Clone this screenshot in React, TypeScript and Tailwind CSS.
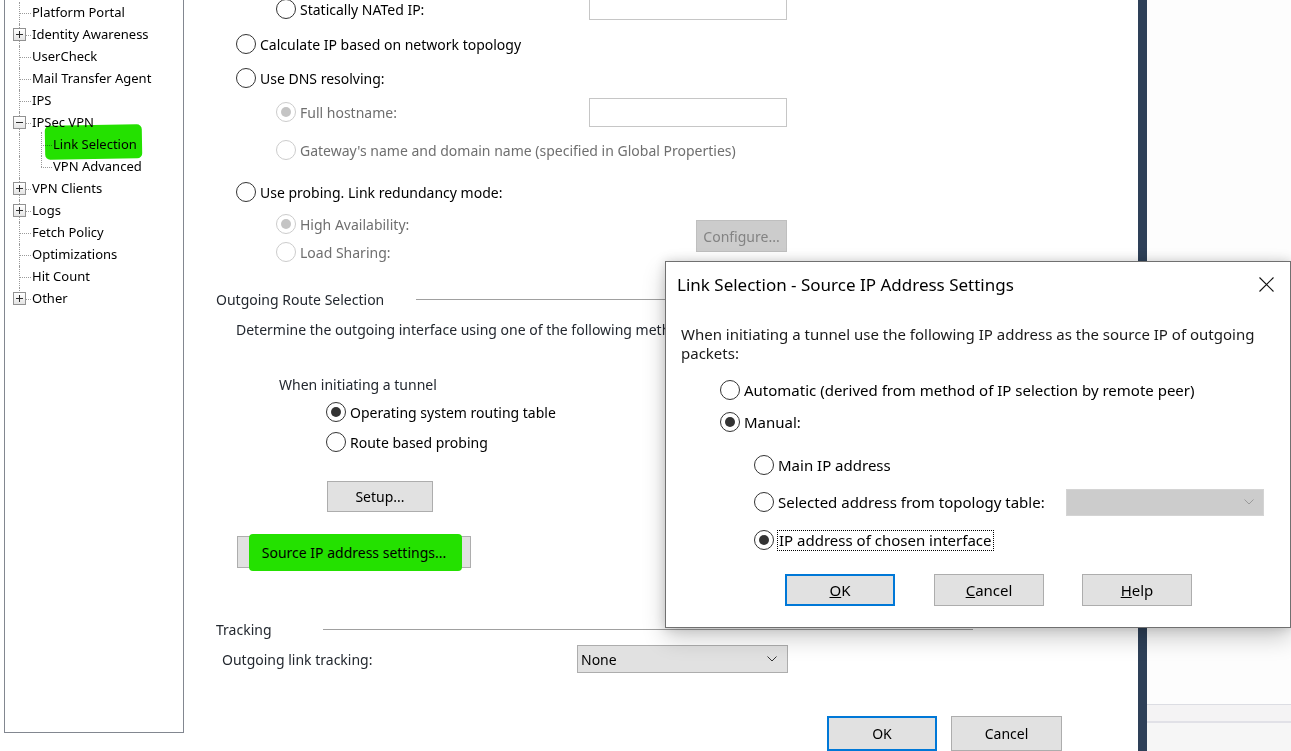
import clsx from 'clsx'
import { ReactNode } from 'react'

type RadioProps = { checked?: boolean; disabled?: boolean }

function Radio({ checked = false, disabled = false }: RadioProps) {
  return (
    <span
      className={clsx(
        'flex h-[20px] w-[20px] shrink-0 items-center justify-center rounded-full border bg-white',
        disabled ? 'border-[#cccccc]' : 'border-[#333333]',
      )}
    >
      {checked ? (
        <span className={clsx('h-[10px] w-[10px] rounded-full', disabled ? 'bg-[#c4c4c4]' : 'bg-[#333333]')} />
      ) : null}
    </span>
  )
}

function RadioRow({ label, checked, disabled }: { label: string; checked?: boolean; disabled?: boolean }) {
  return (
    <div className="flex h-[28px] items-center">
      <Radio checked={checked} disabled={disabled} />
      <span className={clsx('ml-[4px] whitespace-nowrap', disabled ? 'text-[#6f6f6f]' : 'text-black')}>{label}</span>
    </div>
  )
}

function Chevron({ color = '#333333' }: { color?: string }) {
  return (
    <svg width="10" height="6" viewBox="0 0 10 6" fill="none">
      <path d="M0.5 0.5 L5 5 L9.5 0.5" stroke={color} strokeWidth="1" />
    </svg>
  )
}

type TreeItem = { label: string; box?: 'plus' | 'minus'; child?: boolean; last?: boolean; lastChild?: boolean; mark?: boolean }

const TREE: TreeItem[] = [
  { label: 'Platform Portal' },
  { label: 'Identity Awareness', box: 'plus' },
  { label: 'UserCheck' },
  { label: 'Mail Transfer Agent' },
  { label: 'IPS' },
  { label: 'IPSec VPN', box: 'minus' },
  { label: 'Link Selection', child: true, mark: true },
  { label: 'VPN Advanced', child: true, lastChild: true },
  { label: 'VPN Clients', box: 'plus' },
  { label: 'Logs', box: 'plus' },
  { label: 'Fetch Policy' },
  { label: 'Optimizations' },
  { label: 'Hit Count' },
  { label: 'Other', box: 'plus', last: true },
]

function ExpandBox({ kind }: { kind: 'plus' | 'minus' }) {
  return (
    <span className="absolute left-[8px] top-[4px] z-10 flex h-[13px] w-[13px] items-center justify-center border border-[#919191] bg-gradient-to-b from-white to-[#e4e4e4]">
      <svg width="11" height="11" viewBox="0 0 11 11">
        <path d="M2 5.5 H9" stroke="#2b2b2b" strokeWidth="1" />
        {kind === 'plus' ? <path d="M5.5 2 V9" stroke="#2b2b2b" strokeWidth="1" /> : null}
      </svg>
    </span>
  )
}

function TreeRow({ item }: { item: TreeItem }) {
  return (
    <div className={clsx('relative flex h-[22px] items-center', item.child ? 'pl-[48px]' : 'pl-[27px]')}>
      <span
        className={clsx(
          'absolute left-[14px] top-0 border-l border-dotted border-[#9a9a9a]',
          item.last ? 'h-[11px]' : 'h-[22px]',
        )}
      />
      {item.child ? (
        <>
          <span
            className={clsx(
              'absolute left-[36px] border-l border-dotted border-[#9a9a9a]',
              item.label === 'Link Selection' ? 'top-[-2px] h-[24px]' : 'top-0 h-[11px]',
            )}
          />
          <span className="absolute left-[36px] top-[11px] w-[11px] border-t border-dotted border-[#9a9a9a]" />
        </>
      ) : (
        <span className="absolute left-[14px] top-[11px] w-[12px] border-t border-dotted border-[#9a9a9a]" />
      )}
      {item.box ? <ExpandBox kind={item.box} /> : null}
      {item.mark ? (
        <span className="absolute left-[40px] top-[-9px] h-[34px] w-[97px] -rotate-1 rounded-[5px] bg-[#24e100] mix-blend-multiply" />
      ) : null}
      <span className="relative whitespace-nowrap text-black">{item.label}</span>
    </div>
  )
}

function WinButton({
  children,
  className,
  primary,
}: {
  children: ReactNode
  className?: string
  primary?: boolean
}) {
  return (
    <div
      className={clsx(
        'flex items-center justify-center bg-[#e1e1e1] text-black',
        primary ? 'border-2 border-[#0078d7]' : 'border border-[#adadad]',
        className,
      )}
    >
      {children}
    </div>
  )
}

function SourceIpDialog() {
  return (
    <div className="absolute left-[665px] top-[261px] flex h-[367px] w-[626px] flex-col border border-[#707070] bg-white text-[15px] text-black shadow-[0_0_10px_rgba(0,0,0,0.16),0_10px_22px_rgba(0,0,0,0.2)]">
      <div className="flex h-[45px] items-center justify-between pl-[11px] pr-[16px]">
        <span className="text-[17px] text-black">Link Selection - Source IP Address Settings</span>
        <svg width="15" height="15" viewBox="0 0 15 15">
          <path d="M0.5 0.5 L14.5 14.5 M14.5 0.5 L0.5 14.5" stroke="#111111" strokeWidth="1.1" />
        </svg>
      </div>

      <p className="mt-[18px] pl-[15px] leading-[19px] text-[#1a1a1a]">
        When initiating a tunnel use the following IP address as the source IP of outgoing
        <br />
        packets:
      </p>

      <div className="mt-[13px] pl-[54px]">
        <RadioRow label="Automatic (derived from method of IP selection by remote peer)" />
        <div className="mt-[4px]">
          <RadioRow label="Manual:" checked />
        </div>
      </div>

      <div className="mt-[15px] pl-[88px]">
        <RadioRow label="Main IP address" />
        <div className="mt-[9px] flex items-center">
          <div className="w-[312px]">
            <RadioRow label="Selected address from topology table:" />
          </div>
          <div className="flex h-[27px] w-[198px] items-center justify-end border border-[#d4d4d4] bg-[#cccccc] pr-[9px]">
            <Chevron color="#9a9a9a" />
          </div>
        </div>
        <div className="mt-[10px] flex h-[28px] items-center">
          <Radio checked />
          <span className="ml-[3px] whitespace-nowrap border border-dotted border-black px-[1px] leading-[19px]">
            IP address of chosen interface
          </span>
        </div>
      </div>

      <div className="mt-[20px] flex pl-[119px]">
        <WinButton primary className="h-[32px] w-[110px]">
          <span>
            <span className="underline">O</span>K
          </span>
        </WinButton>
        <WinButton className="ml-[39px] h-[32px] w-[110px]">
          <span>
            <span className="underline">C</span>ancel
          </span>
        </WinButton>
        <WinButton className="ml-[38px] h-[32px] w-[110px]">
          <span>
            <span className="underline">H</span>elp
          </span>
        </WinButton>
      </div>
    </div>
  )
}

export default function App() {
  return (
    <div className="relative flex h-[751px] w-full overflow-hidden bg-white font-['Noto_Sans',sans-serif] text-[14px]">
      {/* tree */}
      <div className="ml-[4px] h-[733px] w-[180px] shrink-0 border-x border-b border-[#828790] bg-white pt-[2px] text-[13px]">
        {TREE.map((item) => (
          <TreeRow key={item.label} item={item} />
        ))}
      </div>

      {/* main form */}
      <div className="flex min-w-0 flex-1 flex-col">
        <div className="mt-[-5px] flex h-[28px] items-center pl-[92px]">
          <div className="w-[313px]">
            <RadioRow label="Statically NATed IP:" />
          </div>
          <div className="mb-[8px] h-[30px] w-[198px] border border-[#c6c6c6] bg-white" />
        </div>

        <div className="mt-[7px] pl-[52px]">
          <RadioRow label="Calculate IP based on network topology" />
        </div>
        <div className="mt-[6px] pl-[52px]">
          <RadioRow label="Use DNS resolving:" />
        </div>
        <div className="mt-[6px] flex h-[28px] items-center pl-[92px]">
          <div className="w-[313px]">
            <RadioRow label="Full hostname:" checked disabled />
          </div>
          <div className="h-[29px] w-[198px] border border-[#c6c6c6] bg-white" />
        </div>
        <div className="mt-[10px] pl-[92px]">
          <RadioRow label="Gateway's name and domain name (specified in Global Properties)" disabled />
        </div>
        <div className="mt-[14px] pl-[52px]">
          <RadioRow label="Use probing. Link redundancy mode:" />
        </div>
        <div className="mt-[4px] flex items-center pl-[92px]">
          <div className="w-[420px]">
            <RadioRow label="High Availability:" checked disabled />
            <RadioRow label="Load Sharing:" disabled />
          </div>
          <div className="mb-[4px] flex h-[32px] w-[91px] items-center justify-center border border-[#bfbfbf] bg-[#cccccc] text-[#838383]">
            Configure...
          </div>
        </div>

        <div className="mt-[20px] flex h-[28px] items-center pl-[32px] text-[#23282f]">
          <span className="w-[200px] whitespace-nowrap">Outgoing Route Selection</span>
          <span className="h-px w-[557px] bg-[#a0a0a0]" />
        </div>
        <div className="mt-[2px] flex h-[28px] items-center whitespace-nowrap pl-[52px] text-[#23282f]">
          Determine the outgoing interface using one of the following methods:
        </div>
        <div className="mt-[27px] flex h-[28px] items-center pl-[95px] text-[#23282f]">When initiating a tunnel</div>
        <div className="pl-[142px]">
          <RadioRow label="Operating system routing table" checked />
          <div className="mt-[2px]">
            <RadioRow label="Route based probing" />
          </div>
        </div>
        <div className="mt-[25px] pl-[143px]">
          <WinButton className="h-[31px] w-[106px]">Setup...</WinButton>
        </div>
        <div className="mt-[24px] pl-[53px]">
          <div className="relative flex h-[32px] w-[234px] items-center justify-center border border-[#adadad] bg-[#e1e1e1]">
            <span className="absolute left-[11px] top-[-3px] h-[37px] w-[213px] rounded-[4px] bg-[#24e100]" />
            <span className="relative text-black">Source IP address settings...</span>
          </div>
        </div>

        <div className="mt-[47px] flex h-[28px] items-center pl-[32px] text-[#23282f]">
          <span className="w-[107px] whitespace-nowrap">Tracking</span>
          <span className="h-px w-[650px] bg-[#a0a0a0]" />
        </div>
        <div className="mt-[2px] flex h-[28px] items-center pl-[38px] text-[#23282f]">
          <span className="w-[355px] whitespace-nowrap">Outgoing link tracking:</span>
          <div className="flex h-[28px] w-[211px] items-center justify-between border border-[#adadad] bg-[#e1e1e1] pl-[3px] pr-[10px] text-black">
            <span>None</span>
            <Chevron />
          </div>
        </div>

        <div className="mt-[43px] flex pl-[643px]">
          <WinButton primary className="h-[35px] w-[110px]">
            OK
          </WinButton>
          <WinButton className="ml-[14px] h-[35px] w-[111px]">Cancel</WinButton>
        </div>
      </div>

      {/* dark divider */}
      <div className="w-[9px] shrink-0 bg-[#2e4058]" />

      {/* right pane */}
      <div className="flex w-[144px] shrink-0 flex-col">
        <div className="h-[704px] bg-[#fdfdfd]" />
        <div className="h-[17px] border-t border-[#dcdde3] bg-[#f4f3f4]" />
        <div className="flex-1 border-t-2 border-[#e1e1e7] bg-[#f6f6f6]" />
      </div>

      <SourceIpDialog />
    </div>
  )
}
